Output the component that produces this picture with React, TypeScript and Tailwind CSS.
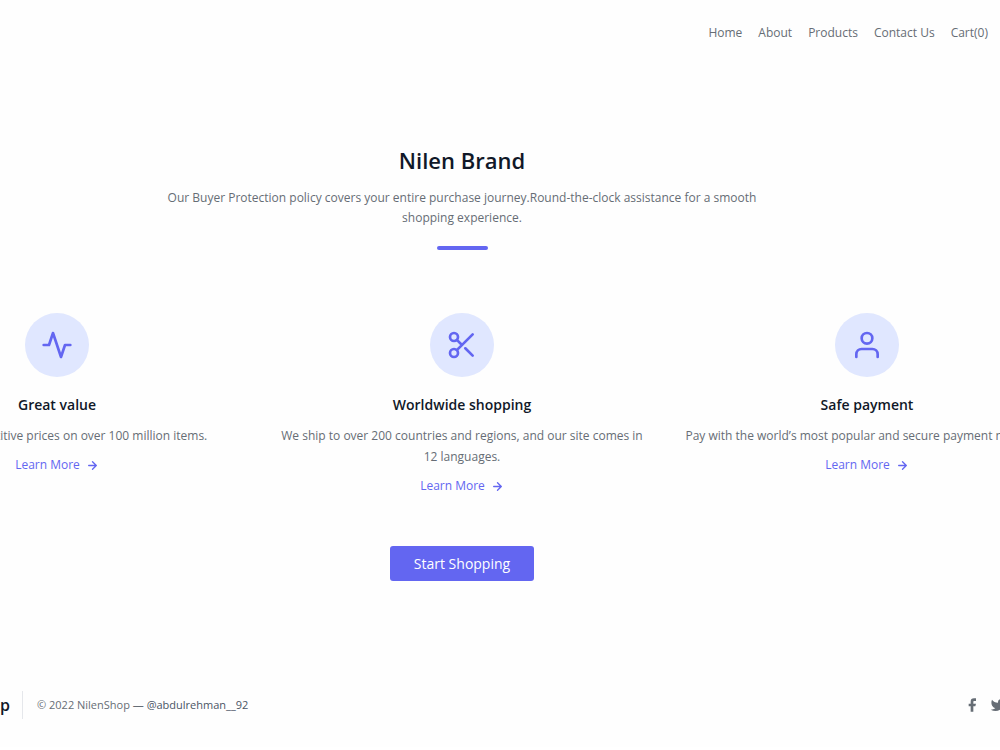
import type { ReactNode } from "react";

const navItems = ["Home", "About", "Products", "Contact Us", "Cart(0)"];

function StrokeIcon({ children, className }: { children: ReactNode; className: string }) {
  return (
    <svg
      viewBox="0 0 24 24"
      fill="none"
      stroke="currentColor"
      strokeLinecap="round"
      strokeLinejoin="round"
      aria-hidden="true"
      className={className}
    >
      {children}
    </svg>
  );
}

const features = [
  {
    title: "Great value",
    text: "We offer competitive prices on over 100 million items.",
    icon: <path d="M22 12h-4l-3 9L9 3l-3 9H2" />,
  },
  {
    title: "Worldwide shopping",
    text: "We ship to over 200 countries and regions, and our site comes in 12 languages.",
    icon: (
      <>
        <circle cx="6" cy="6" r="3" />
        <circle cx="6" cy="18" r="3" />
        <path d="M20 4L8.12 15.88M14.47 14.48L20 20M8.12 8.12L12 12" />
      </>
    ),
  },
  {
    title: "Safe payment",
    text: "Pay with the world’s most popular and secure payment methods.",
    icon: (
      <>
        <path d="M20 21v-2a4 4 0 00-4-4H8a4 4 0 00-4 4v2" />
        <circle cx="12" cy="7" r="4" />
      </>
    ),
  },
];

const socials = [
  { name: "Facebook", icon: <path fill="currentColor" d="M18 2h-3a5 5 0 00-5 5v3H7v4h3v8h4v-8h3l1-4h-4V7a1 1 0 011-1h3z" /> },
  {
    name: "Twitter",
    icon: (
      <path
        fill="currentColor"
        d="M23 3a10.9 10.9 0 01-3.14 1.53 4.48 4.48 0 00-7.86 3v1A10.66 10.66 0 013 4s-4 9 5 13a11.64 11.64 0 01-7 2c9 5 20 0 20-11.5a4.5 4.5 0 00-.08-.83A7.72 7.72 0 0023 3z"
      />
    ),
  },
];

export default function App() {
  return (
    <div className="overflow-hidden bg-[#fefefe] font-['Open_Sans','Noto_Sans',sans-serif] text-xs leading-5 text-[#666d75]">
      <header className="flex justify-end px-3 pt-6">
        <nav className="flex gap-4 leading-[18px]">
          {navItems.map((item) => (
            <a key={item} href="#" className="whitespace-nowrap">
              {item}
            </a>
          ))}
        </nav>
      </header>

      <main className="mr-19 pt-[102px]">
        <section className="flex flex-col items-center text-center">
          <h1 className="text-[22px] leading-8 font-semibold text-gray-900">Nilen Brand</h1>
          <p className="mt-3 max-w-[608px] leading-5">
            Our Buyer Protection policy covers your entire purchase journey.Round-the-clock assistance for a smooth
            shopping experience.
          </p>
          <div className="mt-[18px] h-1 w-[51px] rounded-full bg-[#6366f1]" />
        </section>

        <section className="mt-[63px] flex justify-center">
          {features.map(({ title, text, icon }) => (
            <article key={title} className="flex w-[405px] shrink-0 flex-col items-center px-4 text-center">
              <div className="flex size-16 items-center justify-center rounded-full bg-indigo-100 text-[#6366f1]">
                <StrokeIcon className="size-8 stroke-2">{icon}</StrokeIcon>
              </div>
              <h2 className="mt-4 text-sm leading-6 font-semibold text-gray-900">{title}</h2>
              <p className="mt-2 leading-[21px]">{text}</p>
              <a href="#" className="mt-[9px] flex items-center gap-1.5 text-[#6366f1]">
                Learn More
                <StrokeIcon className="size-[13px] stroke-[2.5]">
                  <path d="M5 12h14M12 5l7 7-7 7" />
                </StrokeIcon>
              </a>
            </article>
          ))}
        </section>

        <div className="mt-[50px] flex justify-center">
          <button type="button" className="h-[35px] w-36 rounded-[3px] bg-[#6366f1] text-sm text-white">
            Start Shopping
          </button>
        </div>
      </main>

      <footer className="mt-[110px] mr-19 flex justify-center pb-7">
        <div className="flex w-[1214px] shrink-0 items-center justify-between px-3">
          <div className="flex items-center">
            <a href="#" className="flex w-[143px] justify-end text-base font-semibold text-gray-900">
              NilenShop
            </a>
            <p className="ml-3 border-l border-gray-200 py-1 pl-3.5 text-[11px]">
              © 2022 NilenShop —{" "}
              <a href="#" className="text-gray-600">
                @abdulrehman__92
              </a>
            </p>
          </div>
          <div className="flex w-[93px] gap-2.5">
            {socials.map(({ name, icon }) => (
              <a key={name} href="#" aria-label={name}>
                <StrokeIcon className="size-4 stroke-none">{icon}</StrokeIcon>
              </a>
            ))}
          </div>
        </div>
      </footer>
    </div>
  );
}
